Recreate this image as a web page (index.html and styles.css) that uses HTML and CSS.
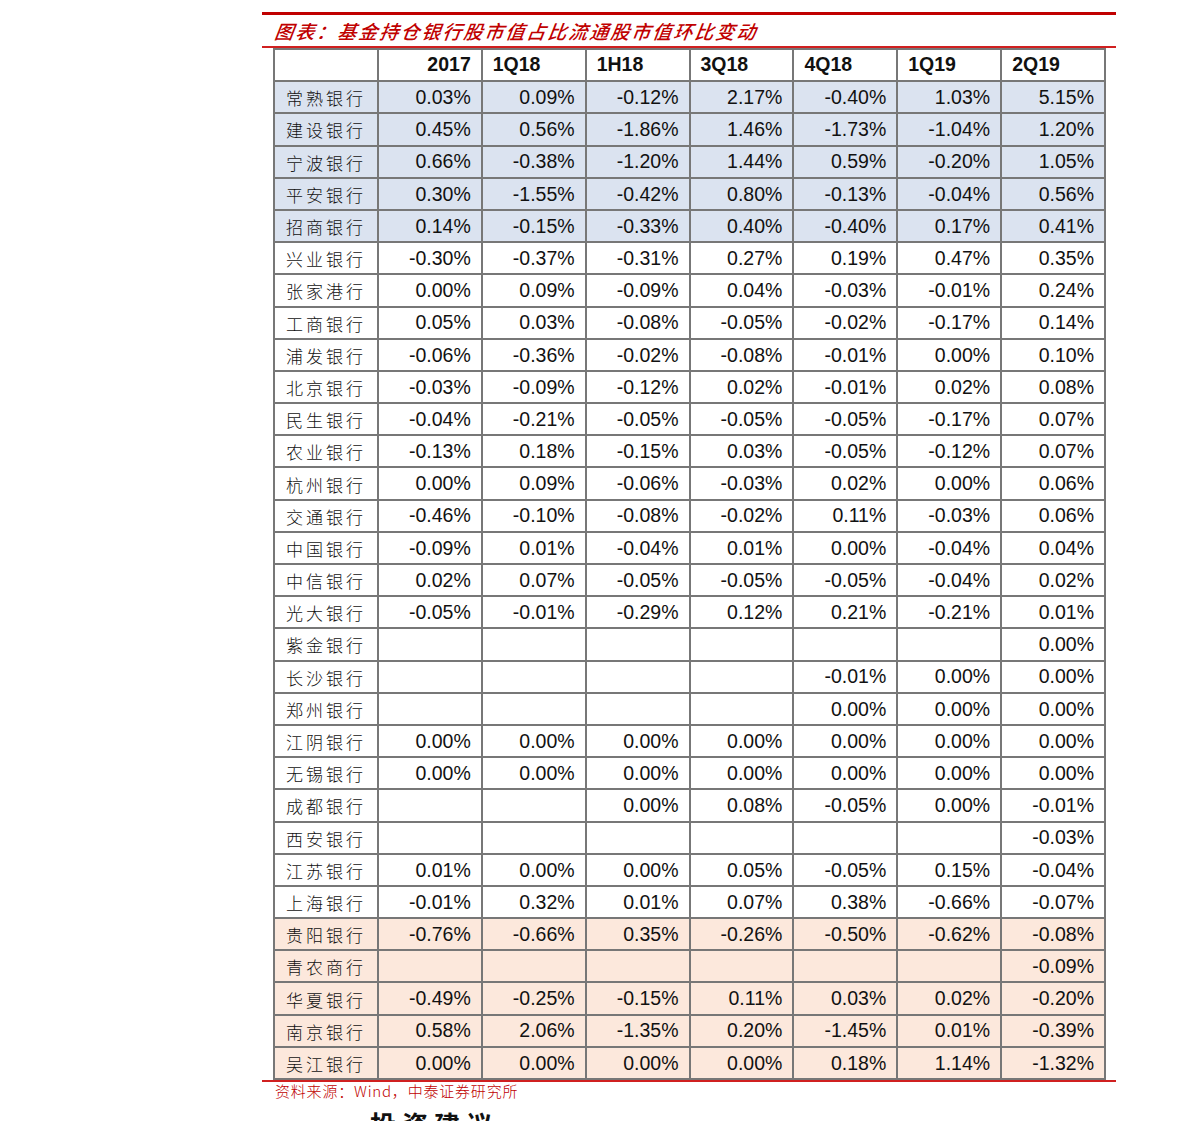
FILE: index.html
```html
<!DOCTYPE html>
<html lang="zh">
<head>
<meta charset="utf-8">
<link rel="stylesheet" href="styles.css">
</head>
<body>
<div class="page">
  <div class="title-bar"><h1 class="title">图表：基金持仓银行股市值占比流通股市值环比变动</h1></div>
  <div class="table-wrap">
  <table class="data">
    <thead>
      <tr><th class="name"></th><th class="r">2017</th><th>1Q18</th><th>1H18</th><th>3Q18</th><th>4Q18</th><th>1Q19</th><th>2Q19</th></tr>
    </thead>
    <tbody id="tb"></tbody>
  </table>
  </div>
  <div class="source">资料来源：Wind，中泰证券研究所</div>
  <h2 class="next">投资建议</h2>
</div>
<script>
const rows = [
["常熟银行","0.03%","0.09%","-0.12%","2.17%","-0.40%","1.03%","5.15%","b"],
["建设银行","0.45%","0.56%","-1.86%","1.46%","-1.73%","-1.04%","1.20%","b"],
["宁波银行","0.66%","-0.38%","-1.20%","1.44%","0.59%","-0.20%","1.05%","b"],
["平安银行","0.30%","-1.55%","-0.42%","0.80%","-0.13%","-0.04%","0.56%","b"],
["招商银行","0.14%","-0.15%","-0.33%","0.40%","-0.40%","0.17%","0.41%","b"],
["兴业银行","-0.30%","-0.37%","-0.31%","0.27%","0.19%","0.47%","0.35%",""],
["张家港行","0.00%","0.09%","-0.09%","0.04%","-0.03%","-0.01%","0.24%",""],
["工商银行","0.05%","0.03%","-0.08%","-0.05%","-0.02%","-0.17%","0.14%",""],
["浦发银行","-0.06%","-0.36%","-0.02%","-0.08%","-0.01%","0.00%","0.10%",""],
["北京银行","-0.03%","-0.09%","-0.12%","0.02%","-0.01%","0.02%","0.08%",""],
["民生银行","-0.04%","-0.21%","-0.05%","-0.05%","-0.05%","-0.17%","0.07%",""],
["农业银行","-0.13%","0.18%","-0.15%","0.03%","-0.05%","-0.12%","0.07%",""],
["杭州银行","0.00%","0.09%","-0.06%","-0.03%","0.02%","0.00%","0.06%",""],
["交通银行","-0.46%","-0.10%","-0.08%","-0.02%","0.11%","-0.03%","0.06%",""],
["中国银行","-0.09%","0.01%","-0.04%","0.01%","0.00%","-0.04%","0.04%",""],
["中信银行","0.02%","0.07%","-0.05%","-0.05%","-0.05%","-0.04%","0.02%",""],
["光大银行","-0.05%","-0.01%","-0.29%","0.12%","0.21%","-0.21%","0.01%",""],
["紫金银行","","","","","","","0.00%",""],
["长沙银行","","","","","-0.01%","0.00%","0.00%",""],
["郑州银行","","","","","0.00%","0.00%","0.00%",""],
["江阴银行","0.00%","0.00%","0.00%","0.00%","0.00%","0.00%","0.00%",""],
["无锡银行","0.00%","0.00%","0.00%","0.00%","0.00%","0.00%","0.00%",""],
["成都银行","","","0.00%","0.08%","-0.05%","0.00%","-0.01%",""],
["西安银行","","","","","","","-0.03%",""],
["江苏银行","0.01%","0.00%","0.00%","0.05%","-0.05%","0.15%","-0.04%",""],
["上海银行","-0.01%","0.32%","0.01%","0.07%","0.38%","-0.66%","-0.07%",""],
["贵阳银行","-0.76%","-0.66%","0.35%","-0.26%","-0.50%","-0.62%","-0.08%","p"],
["青农商行","","","","","","","-0.09%","p"],
["华夏银行","-0.49%","-0.25%","-0.15%","0.11%","0.03%","0.02%","-0.20%","p"],
["南京银行","0.58%","2.06%","-1.35%","0.20%","-1.45%","0.01%","-0.39%","p"],
["吴江银行","0.00%","0.00%","0.00%","0.00%","0.18%","1.14%","-1.32%","p"]
];
const tb = document.getElementById("tb");
rows.forEach(r => {
  const tr = document.createElement("tr");
  if (r[8] === "b") tr.className = "blue";
  if (r[8] === "p") tr.className = "peach";
  r.slice(0, 8).forEach((v, i) => {
    const td = document.createElement("td");
    td.textContent = v;
    td.className = i === 0 ? "name" : "num";
    tr.appendChild(td);
  });
  tb.appendChild(tr);
});
</script>
</body>
</html>
```
FILE: styles.css
```css
html, body {
  margin: 0;
  padding: 0;
  background: #ffffff;
}
.page {
  margin-left: 262px;
  width: 854px;
  padding-top: 12px;
  font-family: "Liberation Sans", Arial, "Noto Sans CJK SC", sans-serif;
  overflow: hidden;
  height: 1109px;
}
.title-bar {
  border-top: 3px solid #c00000;
  border-bottom: 2px solid #d02020;
  height: 31px;
  display: flex;
  align-items: center;
}
.title {
  margin: 0 0 0 13px;
  font-family: "Noto Sans CJK SC", sans-serif;
  font-style: italic;
  font-weight: 500;
  font-size: 19px;
  letter-spacing: 2px;
  color: #c00000;
  line-height: 1;
  transform: skewX(-8deg);
}
.table-wrap {
  padding-left: 11px;
  border-bottom: 2px solid #d02020;
}
.data {
  border-collapse: collapse;
  width: 833px;
  table-layout: fixed;
  font-size: 19.5px;
  color: #111;
}
.data th, .data td {
  border: 2px solid #777;
  padding: 0 10px;
  line-height: 1;
}
.data th {
  height: 30.2px;
  text-align: left;
  font-weight: bold;
  background: #fff;
}
.data th.r {
  text-align: right;
}
.data td {
  height: 29.2px;
  padding-top: 1px;
}
.data td.num {
  text-align: right;
}
.data td.name {
  font-family: "Noto Sans CJK SC", sans-serif;
  font-size: 17px;
  letter-spacing: 3px;
  font-weight: 300;
  padding-left: 11px;
  text-align: left;
}
.data tr.blue td {
  background: #dbe3f0;
}
.data tr.peach td {
  background: #fce8dc;
}
.source {
  margin-left: 13px;
  margin-top: 0;
  font-family: "Noto Sans CJK SC", sans-serif;
  font-size: 15px;
  letter-spacing: 0.8px;
  color: #c00000;
  line-height: 18px;
  font-weight: 300;
}
.next {
  margin: 11px 0 0 108px;
  font-family: "Noto Sans CJK SC", sans-serif;
  font-size: 26px;
  font-weight: bold;
  letter-spacing: 6px;
  color: #111;
  line-height: 1;
}
```
